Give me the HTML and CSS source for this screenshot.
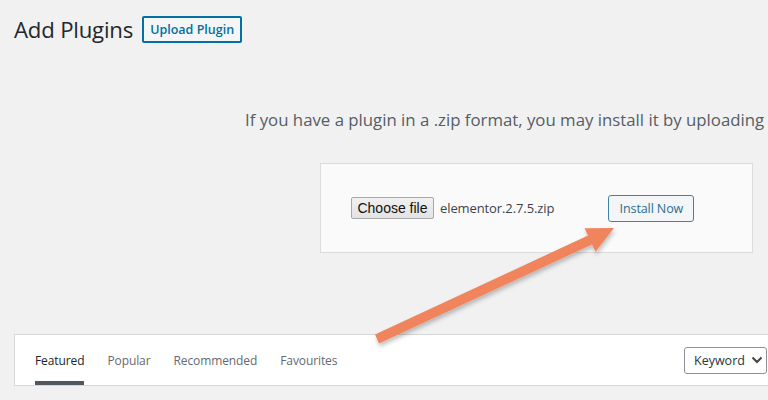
FILE: index.html
```html
<!DOCTYPE html>
<html>
<head>
<meta charset="utf-8">
<link rel="stylesheet" href="styles.css">
</head>
<body>
<div class="wrap">
  <div class="head">
    <h1 class="title">Add Plugins</h1>
    <button class="btn upload">Upload Plugin</button>
  </div>
  <p class="help">If you have a plugin in a .zip format, you may install it by uploading</p>
  <div class="upload-box">
    <span class="file-btn">Choose file</span>
    <span class="file-name">elementor.2.7.5.zip</span>
    <button class="btn install">Install Now</button>
  </div>
  <div class="tabs">
    <nav class="tab-list">
      <span class="tab active">Featured</span>
      <span class="tab">Popular</span>
      <span class="tab">Recommended</span>
      <span class="tab">Favourites</span>
    </nav>
    <div class="select">Keyword
      <svg class="chev" width="12" height="8" viewBox="0 0 12 8"><path d="M1.5 1.5 L6 6 L10.5 1.5" fill="none" stroke="#444" stroke-width="2"/></svg>
    </div>
  </div>
</div>
<svg class="arrow" width="768" height="400" viewBox="0 0 768 400">
  <defs>
    <filter id="sh" x="-10%" y="-10%" width="120%" height="130%">
      <feDropShadow dx="1" dy="3" stdDeviation="2" flood-color="#000" flood-opacity="0.25"/>
    </filter>
  </defs>
  <polygon filter="url(#sh)" fill="#f0845c" points="375,334.5 588,235.5 584.5,228.2 614,228 595.5,251.8 592,244.5 379,343.5"/>
</svg>
</body>
</html>
```

FILE: styles.css
```css
html, body {
  margin: 0;
  padding: 0;
}
body {
  background: #f1f1f1;
  width: 768px;
  height: 400px;
  overflow: hidden;
  position: relative;
  font-family: "Open Sans", "Noto Sans", sans-serif;
  color: #23282d;
}
.wrap {
  padding: 16px 0 0 14px;
  width: 754px;
}
.head {
  display: flex;
  align-items: center;
  gap: 9px;
  height: 27px;
}
.title {
  margin: 0;
  font-size: 22.2px;
  font-weight: 400;
  line-height: 27px;
  color: #23282d;
  letter-spacing: -0.2px;
}
.btn {
  font-family: "Open Sans", "Noto Sans", sans-serif;
  background: #f3f5f6;
  color: #0071a1;
  border: 1px solid #0071a1;
  border-radius: 2px;
  padding: 0 8px;
  cursor: pointer;
}
.upload {
  height: 27px;
  font-size: 12.5px;
  font-weight: 600;
  border-width: 2px;
  width: 100px;
  padding: 0;
}
.help {
  margin: 65px 0 0 231px;
  white-space: nowrap;
  font-size: 16.8px;
  line-height: 24px;
  color: #555d66;
}
.upload-box {
  margin: 31px 0 0 306px;
  width: 401px;
  height: 88px;
  padding: 0 0 0 30px;
  background: #fafafa;
  border: 1px solid #dcdcde;
  display: flex;
  align-items: center;
}
.file-btn {
  font-family: "Liberation Sans", Arial, sans-serif;
  font-size: 14px;
  color: #111;
  background: linear-gradient(#f0f0f0, #e3e3e3);
  border: 1px solid #a9a9a9;
  border-radius: 2px;
  height: 20px;
  line-height: 20px;
  width: 81px;
  text-align: center;
  box-sizing: content-box;
}
.file-name {
  margin-left: 6px;
  font-size: 13px;
  color: #3c434a;
  letter-spacing: -0.1px;
}
.install {
  margin-left: 54px;
  height: 27px;
  width: 86px;
  padding: 0;
  font-size: 12.5px;
  color: #2a6f8f;
  border-color: #3d84a3;
  border-radius: 3px;
  letter-spacing: -0.1px;
}
.tabs {
  margin-top: 81px;
  height: 52px;
  background: #fff;
  border: 1px solid #d4d6d8;
  border-right: none;
  display: flex;
  align-items: center;
  justify-content: space-between;
  padding-left: 20px;
  box-sizing: border-box;
  width: 754px;
}
.tab-list {
  display: flex;
  gap: 23px;
  height: 100%;
}
.tab {
  font-size: 12px;
  color: #646970;
  display: flex;
  align-items: center;
  height: 100%;
  box-sizing: border-box;
  padding-top: 1px;
  letter-spacing: -0.1px;
}
.tab.active {
  color: #1d2327;
  border-bottom: 4px solid #50575e;
  padding-top: 5px;
}
.select {
  display: flex;
  align-items: center;
  gap: 6px;
  height: 27px;
  box-sizing: border-box;
  width: 83px;
  padding-left: 9px;
  border: 1px solid #8c8f94;
  border-radius: 3px;
  font-size: 12.5px;
  color: #2c3338;
  background: #fff;
  margin-right: 1px;
}
.arrow {
  position: absolute;
  left: 0;
  top: 0;
  pointer-events: none;
}
```
